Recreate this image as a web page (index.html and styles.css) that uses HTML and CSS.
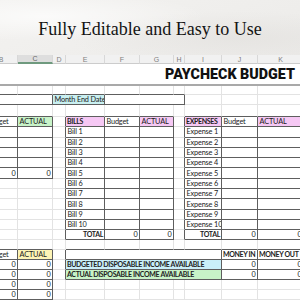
FILE: index.html
```html
<!DOCTYPE html>
<html lang="en">
<head>
<meta charset="utf-8">
<title>Paycheck Budget</title>
<link rel="stylesheet" href="styles.css">
</head>
<body>
<header class="banner"><h1>Fully Editable and Easy to Use</h1></header>
<main class="sheet">
  <!-- column letters -->
  <div class="h">B</div><div class="h sel">C</div><div class="h">D</div><div class="h">E</div><div class="h">F</div><div class="h">G</div><div class="h">H</div><div class="h">I</div><div class="h">J</div><div class="h">K</div>
  <!-- title -->
  <div class="c title">PAYCHECK BUDGET</div>
  <!-- blank -->
  <div class="c kb"></div><div class="c kb"></div><div class="c kb"></div><div class="c kb"></div><div class="c kb"></div><div class="c kb"></div><div class="c kb"></div><div class="c"></div><div class="c"></div><div class="c"></div>
  <!-- month end date -->
  <div class="c k s2"></div><div class="c k s2 teal">Month End Date</div><div class="c k s3"></div><div class="c"></div><div class="c"></div><div class="c"></div>
  <!-- blank -->
  <div class="c kb"></div><div class="c kb"></div><div class="c"></div><div class="c kb"></div><div class="c kb"></div><div class="c kb"></div><div class="c"></div><div class="c kb"></div><div class="c kb"></div><div class="c kb"></div>
  <!-- headers -->
  <div class="c k">Budget</div><div class="c k green">ACTUAL</div><div class="c kr"></div><div class="c k pink b">BILLS</div><div class="c k">Budget</div><div class="c k pink">ACTUAL</div><div class="c kr"></div><div class="c k pink b">EXPENSES</div><div class="c k">Budget</div><div class="c k pink">ACTUAL</div>
  <!-- rows 1-4 -->
  <div class="c k"></div><div class="c k"></div><div class="c kr"></div><div class="c k">Bill 1</div><div class="c k"></div><div class="c k"></div><div class="c kr"></div><div class="c k">Expense 1</div><div class="c k"></div><div class="c k"></div>
  <div class="c k"></div><div class="c k"></div><div class="c kr"></div><div class="c k">Bill 2</div><div class="c k"></div><div class="c k"></div><div class="c kr"></div><div class="c k">Expense 2</div><div class="c k"></div><div class="c k"></div>
  <div class="c k"></div><div class="c k"></div><div class="c kr"></div><div class="c k">Bill 3</div><div class="c k"></div><div class="c k"></div><div class="c kr"></div><div class="c k">Expense 3</div><div class="c k"></div><div class="c k"></div>
  <div class="c k"></div><div class="c k"></div><div class="c kr"></div><div class="c k">Bill 4</div><div class="c k"></div><div class="c k"></div><div class="c kr"></div><div class="c k">Expense 4</div><div class="c k"></div><div class="c k"></div>
  <!-- row 5 -->
  <div class="c k r">0</div><div class="c k r">0</div><div class="c kr"></div><div class="c k">Bill 5</div><div class="c k"></div><div class="c k"></div><div class="c kr"></div><div class="c k">Expense 5</div><div class="c k"></div><div class="c k"></div>
  <!-- rows 6-10 -->
  <div class="c"></div><div class="c"></div><div class="c kr"></div><div class="c k">Bill 6</div><div class="c k"></div><div class="c k"></div><div class="c kr"></div><div class="c k">Expense 6</div><div class="c k"></div><div class="c k"></div>
  <div class="c"></div><div class="c"></div><div class="c kr"></div><div class="c k">Bill 7</div><div class="c k"></div><div class="c k"></div><div class="c kr"></div><div class="c k">Expense 7</div><div class="c k"></div><div class="c k"></div>
  <div class="c"></div><div class="c"></div><div class="c kr"></div><div class="c k">Bill 8</div><div class="c k"></div><div class="c k"></div><div class="c kr"></div><div class="c k">Expense 8</div><div class="c k"></div><div class="c k"></div>
  <div class="c"></div><div class="c"></div><div class="c kr"></div><div class="c k">Bill 9</div><div class="c k"></div><div class="c k"></div><div class="c kr"></div><div class="c k">Expense 9</div><div class="c k"></div><div class="c k"></div>
  <div class="c"></div><div class="c"></div><div class="c kr"></div><div class="c k">Bill 10</div><div class="c k"></div><div class="c k"></div><div class="c kr"></div><div class="c k">Expense 10</div><div class="c k"></div><div class="c k"></div>
  <!-- totals -->
  <div class="c"></div><div class="c"></div><div class="c kr"></div><div class="c k b r">TOTAL</div><div class="c k r">0</div><div class="c k r">0</div><div class="c kr"></div><div class="c k b r">TOTAL</div><div class="c k r">0</div><div class="c k r">0</div>
  <!-- blank -->
  <div class="c kb"></div><div class="c kb"></div><div class="c"></div><div class="c kb"></div><div class="c kb"></div><div class="c kb"></div><div class="c kb"></div><div class="c kb"></div><div class="c kb"></div><div class="c kb"></div>
  <!-- lower headers -->
  <div class="c k">Budget</div><div class="c k yellow">ACTUAL</div><div class="c kr"></div><div class="c k s5"></div><div class="c k b">MONEY IN</div><div class="c k b">MONEY OUT</div>
  <div class="c k r">0</div><div class="c k r">0</div><div class="c kr"></div><div class="c k s5 cyan b">BUDGETED DISPOSABLE INCOME AVAILABLE</div><div class="c k r">0</div><div class="c k r">0</div>
  <div class="c k r">0</div><div class="c k r">0</div><div class="c kr"></div><div class="c k s5 green b">ACTUAL DISPOSABLE INCOME AVAILABLE</div><div class="c k r">0</div><div class="c k r">0</div>
  <div class="c k r">0</div><div class="c k r">0</div><div class="c"></div><div class="c"></div><div class="c"></div><div class="c"></div><div class="c"></div><div class="c"></div><div class="c"></div><div class="c"></div>
  <div class="c k r">0</div><div class="c k r">0</div><div class="c"></div><div class="c"></div><div class="c"></div><div class="c"></div><div class="c"></div><div class="c"></div><div class="c"></div><div class="c"></div>
</main>
</body>
</html>
```

FILE: styles.css
```css
* { box-sizing: border-box; }
html, body { margin: 0; padding: 0; }
body {
  width: 300px;
  height: 300px;
  overflow: hidden;
  background: #ffffff;
  font-family: Lato, "Liberation Sans", sans-serif;
}
.banner {
  height: 55px;
  display: flex;
  align-items: center;
  justify-content: center;
  background:
    radial-gradient(ellipse at 15% 30%, rgba(255,255,255,0.7), rgba(255,255,255,0) 45%),
    radial-gradient(ellipse at 80% 70%, rgba(225,223,220,0.6), rgba(225,223,220,0) 50%),
    linear-gradient(160deg, #f3f2f0, #ecebe9);
}
.banner h1 {
  margin: 0;
  padding-top: 4px;
  font-family: "Liberation Serif", serif;
  font-weight: 400;
  font-size: 18px;
  color: #141414;
}
.sheet {
  display: grid;
  grid-template-columns: 33px 35px 13px 39px 35px 34px 11px 37px 36px 46px;
  grid-template-rows: 9px 22px 9px 10px 12px repeat(11, 10.3px) 10px 10px 10px repeat(4, 10px);
  margin-left: -15px;
  width: 319px;
  font-size: 7.3px;
  letter-spacing: -0.15px;
  color: #222;
}
.h {
  display: flex;
  align-items: center;
  justify-content: center;
  background: #f1f1f1;
  color: #808080;
  font-family: "Liberation Sans", sans-serif;
  font-size: 7px;
  letter-spacing: 0;
  border-right: 1px solid #d8d8d8;
  border-bottom: 1px solid #cccccc;
}
.h.sel {
  background: #dedede;
  color: #666;
  border-bottom: 2px solid #6f9a7e;
}
.c {
  display: flex;
  align-items: center;
  padding: 0 1.5px;
  line-height: 9px;
  white-space: nowrap;
  overflow: hidden;
  border-right: 1px solid #e3e3e3;
  border-bottom: 1px solid #e3e3e3;
}
.title {
  grid-column: 1 / -1;
  justify-content: flex-end;
  padding-right: 9px;
  border-right: none;
  border-bottom: 2px solid #a9a9a9;
  font-family: Roboto, "Liberation Sans", sans-serif;
  font-weight: 900;
  font-size: 14.3px;
  letter-spacing: 0;
  color: #111;
  line-height: 18px;
}
.k { border-right-color: #5e5e5e; border-bottom-color: #5e5e5e; }
.kb { border-bottom-color: #5e5e5e; }
.kr { border-right-color: #5e5e5e; }
.r { justify-content: flex-end; }
.b { font-weight: 700; font-size: 7px; letter-spacing: -0.35px; padding: 0 1px; }
.s2 { grid-column: span 2; }
.s3 { grid-column: span 3; }
.s5 { grid-column: span 5; }
.teal { background: #c9f0f1; }
.green { background: #c8f3c8; }
.pink { background: #f6c8f4; }
.yellow { background: #fdf4b6; }
.cyan { background: #c9eff9; }
```
